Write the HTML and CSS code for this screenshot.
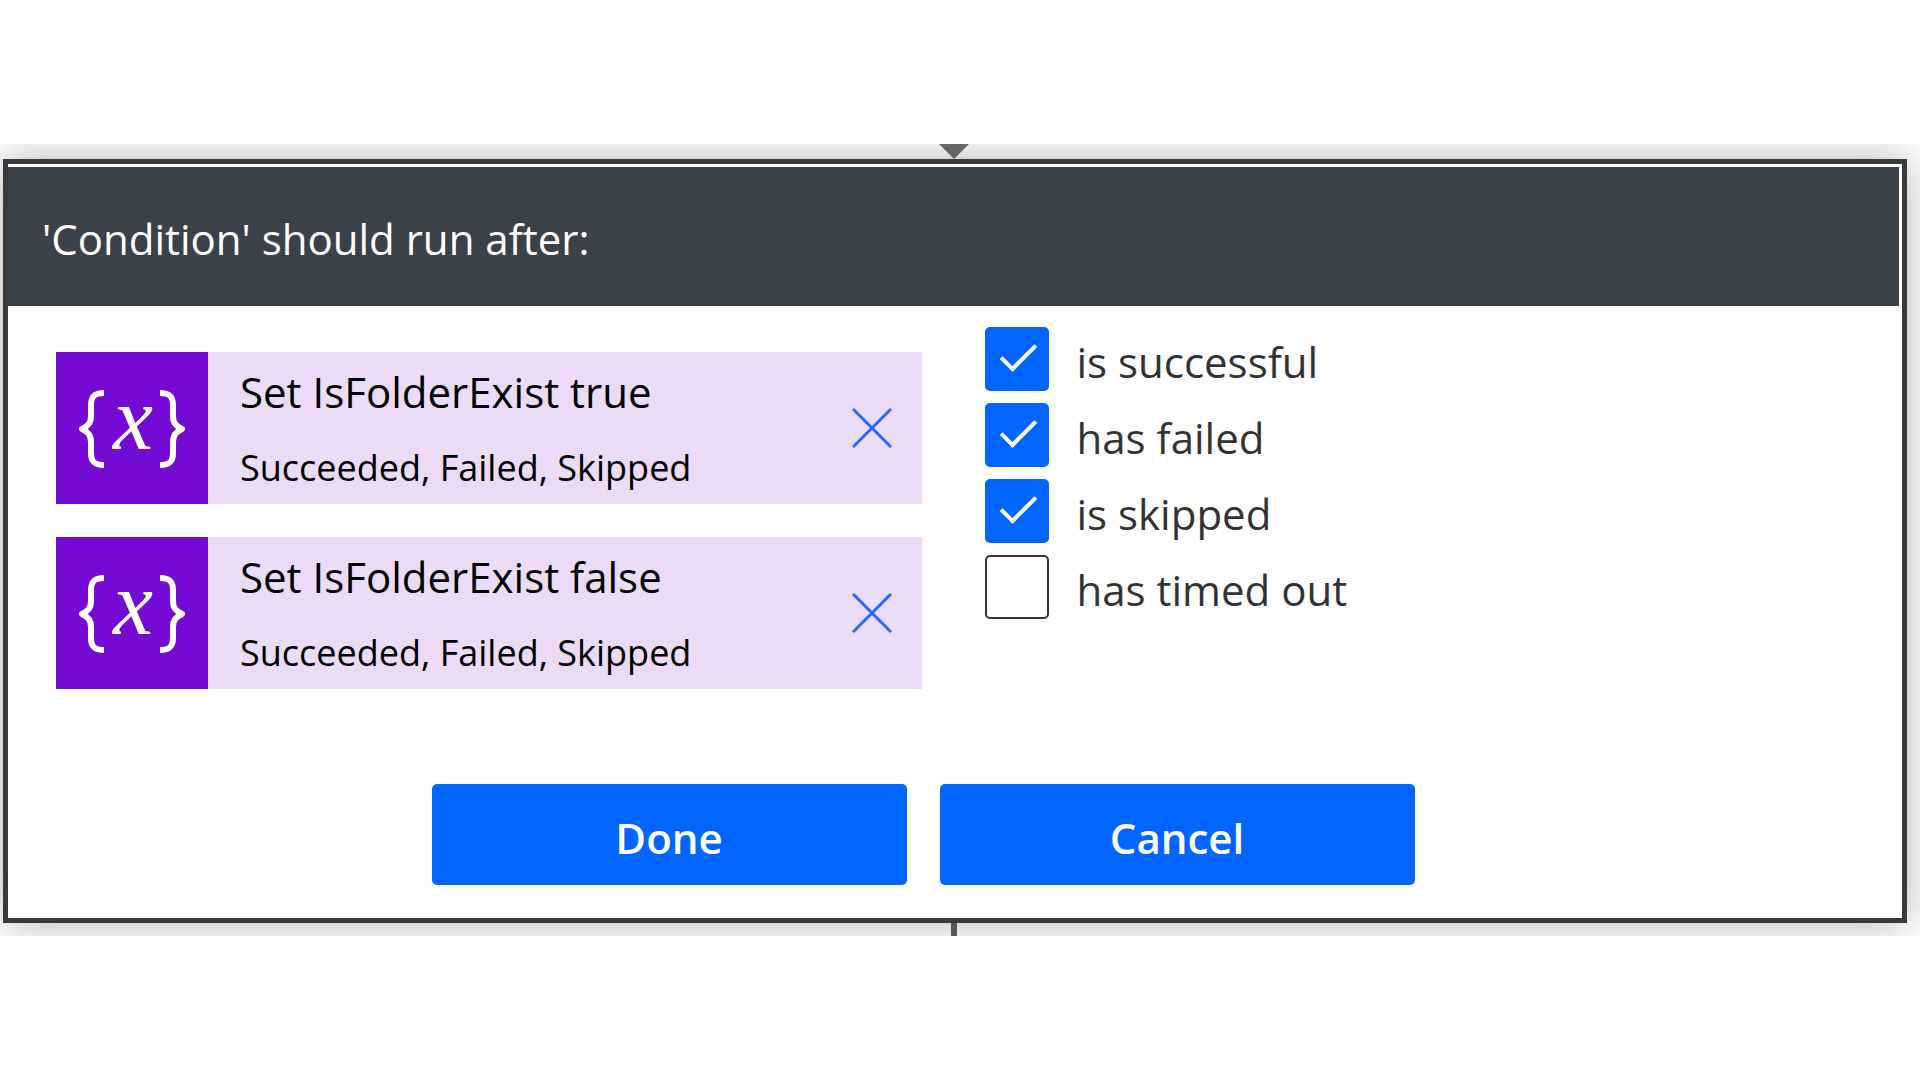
FILE: index.html
```html
<!DOCTYPE html>
<html lang="en">
<head>
    <meta charset="UTF-8">
    <meta name="viewport" content="width=device-width, initial-scale=1.0">
    <title>Configure run after</title>
    <link rel="stylesheet" href="styles.css">
</head>
<body>

<main class="canvas">
    <span class="arrow"></span>
    <span class="connector"></span>

    <form class="dialog">
        <h1 class="dialog-title">'Condition' should run after:</h1>

        <div class="dialog-body">
            <div class="action-list">
                <div class="action">
                    <svg class="action-icon" viewBox="0 0 152 152" aria-hidden="true">
                        <path d="M48 41C38 41 35 45 35 53V64C35 71 32 74 26 77C32 80 35 83 35 90V101C35 109 38 113 48 113"/>
                        <path d="M104 41C114 41 117 45 117 53V64C117 71 120 74 126 77C120 80 117 83 117 90V101C117 109 114 113 104 113"/>
                        <text x="77" y="97" text-anchor="middle">x</text>
                    </svg>
                    <div class="action-text">
                        <div class="action-name">Set IsFolderExist true</div>
                        <div class="action-status">Succeeded, Failed, Skipped</div>
                    </div>
                    <button type="button" class="remove-btn" aria-label="Remove">
                        <svg class="remove-icon" viewBox="0 0 40 40">
                            <path d="M1 1L39 39M39 1L1 39"/>
                        </svg>
                    </button>
                </div>
                <div class="action">
                    <svg class="action-icon" viewBox="0 0 152 152" aria-hidden="true">
                        <path d="M48 41C38 41 35 45 35 53V64C35 71 32 74 26 77C32 80 35 83 35 90V101C35 109 38 113 48 113"/>
                        <path d="M104 41C114 41 117 45 117 53V64C117 71 120 74 126 77C120 80 117 83 117 90V101C117 109 114 113 104 113"/>
                        <text x="77" y="97" text-anchor="middle">x</text>
                    </svg>
                    <div class="action-text">
                        <div class="action-name">Set IsFolderExist false</div>
                        <div class="action-status">Succeeded, Failed, Skipped</div>
                    </div>
                    <button type="button" class="remove-btn" aria-label="Remove">
                        <svg class="remove-icon" viewBox="0 0 40 40">
                            <path d="M1 1L39 39M39 1L1 39"/>
                        </svg>
                    </button>
                </div>
            </div>

            <div class="options">
                <div class="option">
                    <input type="checkbox" id="successful" checked>
                    <label for="successful">is successful</label>
                </div>
                <div class="option">
                    <input type="checkbox" id="failed" checked>
                    <label for="failed">has failed</label>
                </div>
                <div class="option">
                    <input type="checkbox" id="skipped" checked>
                    <label for="skipped">is skipped</label>
                </div>
                <div class="option">
                    <input type="checkbox" id="timed-out">
                    <label for="timed-out">has timed out</label>
                </div>
            </div>
        </div>

        <div class="dialog-buttons">
            <button type="button" class="btn">Done</button>
            <button type="button" class="btn">Cancel</button>
        </div>
    </form>
</main>

</body>
</html>
```
FILE: styles.css
```css
* {
    box-sizing: border-box;
}
body {
    font-family: "Open Sans", "Noto Sans", sans-serif;
    font-size: 42px;
    background-color: #fff;
    margin: 0;
    padding-top: 144px;
}
.canvas {
    position: relative;
    overflow: hidden;
    padding: 15px 13px 13px 3px;
}
.dialog {
    background-color: #fff;
    border: 5px solid #3a3a3a;
    box-shadow: 0 0 40px rgba(0, 0, 0, 0.3);
}
/* ends of the flow line above and below the dialog */
.arrow, .connector {
    position: absolute;
    z-index: 1;
    left: calc(50% - 6px);
    transform: translateX(-50%);
}
.arrow {
    top: 0;
    border: 15px solid transparent;
    border-top-color: #666;
    border-bottom: none;
}
.connector {
    bottom: 0;
    width: 6px;
    height: 13px;
    background-color: #555;
}
.dialog-title {
    margin: 3px 3px 0 0;
    padding: 39px 34px 35px;
    background-color: #3b4149;
    color: #fff;
    font-size: 42px;
    font-weight: 400;
    line-height: 65px;
}
.dialog-body {
    display: grid;
    grid-template-columns: 1fr 1fr;
    gap: 63px;
    padding: 21px 52px 0 48px;
}
.action-list {
    display: flex;
    flex-direction: column;
    gap: 33px;
    padding-top: 25px;
}
.action {
    display: flex;
    align-items: center;
    background-color: #ebdbf7;
    color: #000;
}
.action-icon {
    flex: none;
    width: 152px;
    height: 152px;
    background-color: #750bd3;
}
.action-icon path {
    fill: none;
    stroke: #fff;
    stroke-width: 6px;
    stroke-linejoin: round;
}
.action-icon text {
    font-family: "Liberation Serif", serif;
    font-style: italic;
    font-size: 90px;
    fill: #fff;
}
.action-text {
    flex: 1;
    padding-left: 32px;
    white-space: nowrap;
}
.action-name {
    line-height: 80px;
}
.action-status {
    font-size: 36px;
    line-height: 72px;
}
.remove-btn {
    display: flex;
    padding: 0 30px;
    border: none;
    background: none;
    cursor: pointer;
}
.remove-icon {
    width: 40px;
    height: 40px;
    stroke: #2b68ff;
    stroke-width: 3px;
}
.options {
    display: flex;
    flex-direction: column;
    gap: 12px;
}
.option {
    display: flex;
    align-items: center;
    gap: 28px;
    color: #333;
}
.option label {
    padding-top: 5px;
    line-height: 58px;
}
.option input {
    appearance: none;
    display: grid;
    place-items: center;
    width: 64px;
    height: 64px;
    margin: 0;
    border: 2px solid #333;
    border-radius: 5px;
    background-color: #fff;
}
.option input:checked {
    padding: 0 0 12px 3px;
    border-color: #0066ff;
    background-color: #0066ff;
}
.option input:checked::before {
    content: "";
    box-sizing: border-box;
    width: 35px;
    height: 18px;
    border-left: 4px solid #fff;
    border-bottom: 4px solid #fff;
    transform: rotate(-45deg);
}
.dialog-buttons {
    display: flex;
    justify-content: center;
    gap: 33px;
    padding: 95px 64px 33px 0;
}
.btn {
    flex: 0 1 475px;
    padding: 21px 16px 15px;
    border: none;
    border-radius: 5px;
    background-color: #0066ff;
    color: #fff;
    font-family: inherit;
    font-size: 42px;
    font-weight: 600;
    line-height: 65px;
    cursor: pointer;
}
.btn:hover {
    background-color: #0058db;
}
```
